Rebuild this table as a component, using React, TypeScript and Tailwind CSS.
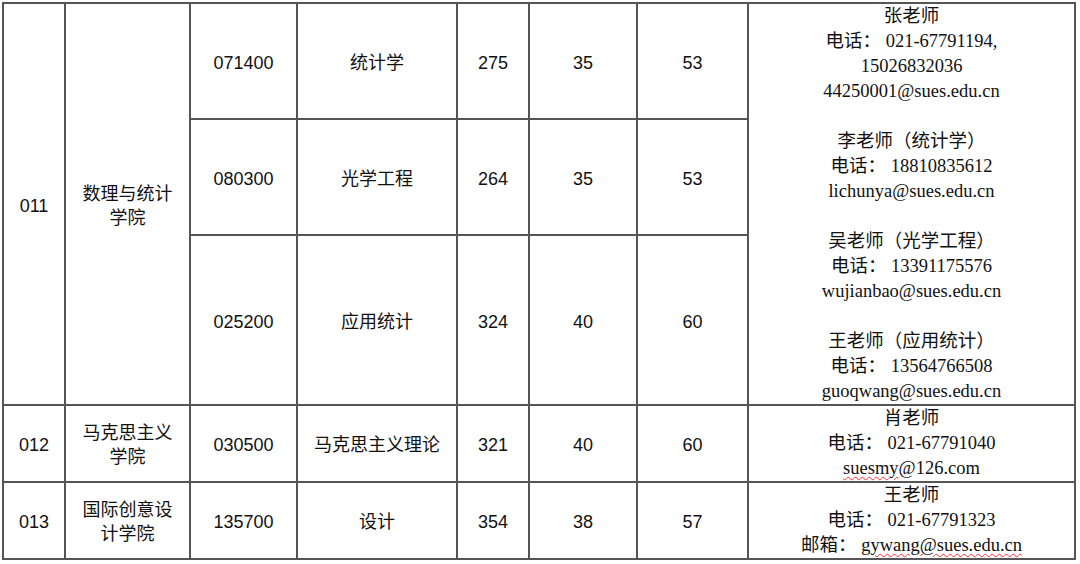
const sans = "font-['Liberation_Sans','Noto_Sans_CJK_SC',sans-serif]";
const serif = "font-['Liberation_Serif','Noto_Sans_CJK_SC',serif]";

const td = `border-2 border-[#555] text-center align-middle pt-[3px] text-[18px] leading-[24px] text-[#111] ${sans}`;
const contact = `border-2 border-[#555] text-center align-middle text-[18.5px] leading-[25px] text-[#111] ${serif}`;

type Row = { code: string; name: string; score: string; a: string; b: string; h: string };

const rows: Row[] = [
  { code: "071400", name: "统计学", score: "275", a: "35", b: "53", h: "h-[116px]" },
  { code: "080300", name: "光学工程", score: "264", a: "35", b: "53", h: "h-[116px]" },
  { code: "025200", name: "应用统计", score: "324", a: "40", b: "60", h: "h-[170px]" },
];

function Wavy({ children }: { children: React.ReactNode }) {
  return (
    <span className="underline decoration-wavy decoration-red-500 decoration-1 underline-offset-2">{children}</span>
  );
}

// full-width brackets kept at a full em, as in the source document
function Teacher({ name, subject }: { name: string; subject: string }) {
  return (
    <div>
      {name}
      <span className="inline-block w-[1em] text-right">（</span>
      {subject}
      <span className="inline-block w-[1em] text-left">）</span>
    </div>
  );
}

export default function App() {
  return (
    <div className="w-[1080px] h-[564px] bg-white pl-[2px] pt-[2px]">
      <table className="border-collapse table-fixed w-[1074px] [text-spacing-trim:space-all]">
        <colgroup>
          <col className="w-[62px]" />
          <col className="w-[125px]" />
          <col className="w-[107px]" />
          <col className="w-[160px]" />
          <col className="w-[72px]" />
          <col className="w-[108px]" />
          <col className="w-[111px]" />
          <col className="w-[327px]" />
        </colgroup>
        <tbody>
          {rows.map((r, i) => (
            <tr key={r.code} className={r.h}>
              {i === 0 && (
                <>
                  <td rowSpan={3} className={td}>011</td>
                  <td rowSpan={3} className={td}>
                    数理与统计
                    <br />
                    学院
                  </td>
                </>
              )}
              <td className={td}>{r.code}</td>
              <td className={td}>{r.name}</td>
              <td className={td}>{r.score}</td>
              <td className={td}>{r.a}</td>
              <td className={td}>{r.b}</td>
              {i === 0 && (
                <td rowSpan={3} className={contact}>
                  <div>张老师</div>
                  <div>电话：&nbsp;021-67791194,</div>
                  <div>15026832036</div>
                  <div>44250001@sues.edu.cn</div>
                  <div>&nbsp;</div>
                  <Teacher name="李老师" subject="统计学" />
                  <div>电话：&nbsp;18810835612</div>
                  <div>lichunya@sues.edu.cn</div>
                  <div>&nbsp;</div>
                  <Teacher name="吴老师" subject="光学工程" />
                  <div>电话：&nbsp;13391175576</div>
                  <div>wujianbao@sues.edu.cn</div>
                  <div>&nbsp;</div>
                  <Teacher name="王老师" subject="应用统计" />
                  <div>电话：&nbsp;13564766508</div>
                  <div>guoqwang@sues.edu.cn</div>
                </td>
              )}
            </tr>
          ))}
          <tr className="h-[77px]">
            <td className={td}>012</td>
            <td className={td}>
              马克思主义
              <br />
              学院
            </td>
            <td className={td}>030500</td>
            <td className={td}>马克思主义理论</td>
            <td className={td}>321</td>
            <td className={td}>40</td>
            <td className={td}>60</td>
            <td className={contact}>
              <div>肖老师</div>
              <div>电话：&nbsp;021-67791040</div>
              <div>
                <Wavy>suesmy</Wavy>@126.com
              </div>
            </td>
          </tr>
          <tr className="h-[77px]">
            <td className={td}>013</td>
            <td className={td}>
              国际创意设
              <br />
              计学院
            </td>
            <td className={td}>135700</td>
            <td className={td}>设计</td>
            <td className={td}>354</td>
            <td className={td}>38</td>
            <td className={td}>57</td>
            <td className={contact}>
              <div>王老师</div>
              <div>电话：&nbsp;021-67791323</div>
              <div>
                邮箱：&nbsp;<Wavy>gywang@sues.edu.cn</Wavy>
              </div>
            </td>
          </tr>
        </tbody>
      </table>
    </div>
  );
}
